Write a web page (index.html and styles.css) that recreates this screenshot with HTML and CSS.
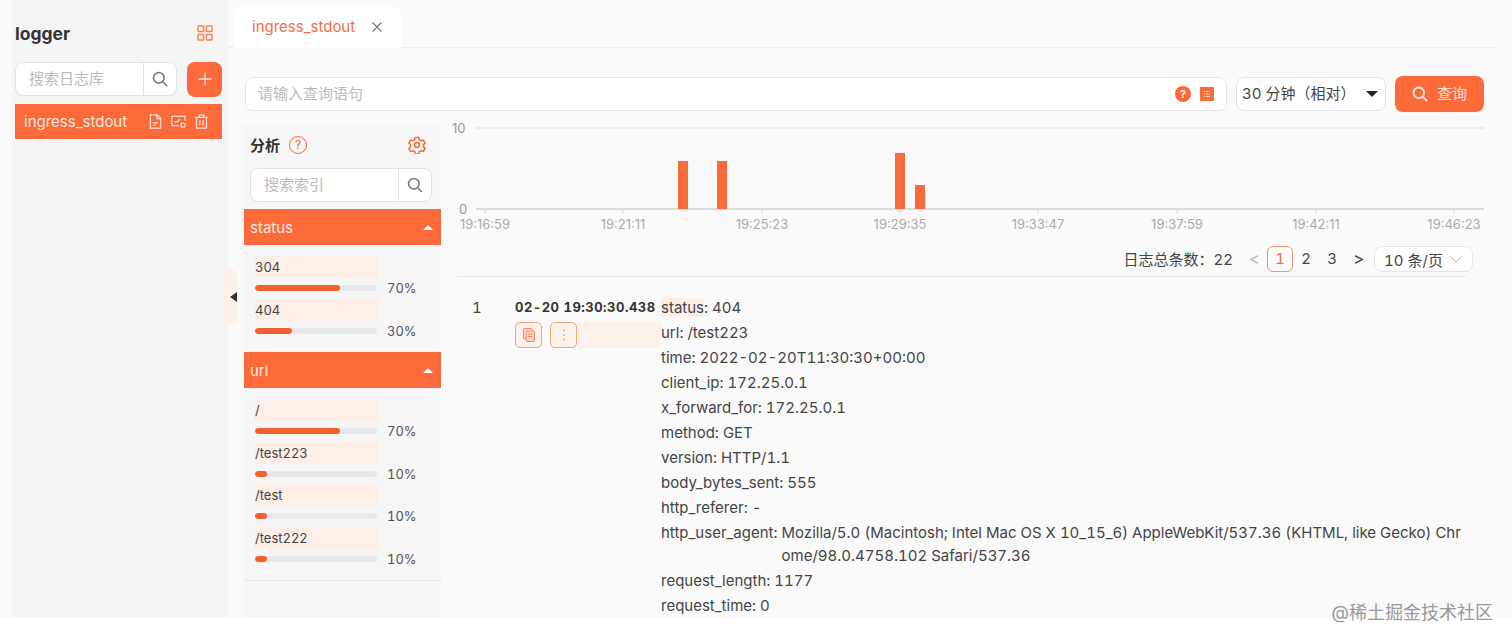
FILE: index.html
```html
<!DOCTYPE html>
<html lang="zh">
<head>
<meta charset="utf-8">
<title>logger</title>
<link rel="stylesheet" href="styles.css">
</head>
<body>
<div class="app">
  <aside class="sidebar">
    <div class="side-head">
      <span class="side-title">logger</span>
      <svg class="ico16" viewBox="0 0 16 16" fill="none" stroke="#f58458" stroke-width="1.500"><rect x="1" y="1" width="5.600" height="5.600" rx=".6"/><rect x="9.400" y="1" width="5.600" height="5.600" rx=".6"/><rect x="1" y="9.400" width="5.600" height="5.600" rx=".6"/><rect x="9.400" y="9.400" width="5.600" height="5.600" rx=".6"/></svg>
    </div>
    <div class="side-search">
      <div class="search side-box">
        <span class="search-text">搜索日志库</span>
        <span class="search-btn"><svg class="ico16" viewBox="0 0 16 16" fill="none" stroke="#777" stroke-width="1.600"><circle cx="6.800" cy="6.800" r="5.300"/><path d="M10.800 10.800L15 15"/></svg></span>
      </div>
      <span class="add-btn"><svg class="ico16" viewBox="0 0 16 16" stroke="#ffe4d9" stroke-width="1.300"><path d="M8 1.500v13M1.500 8h13"/></svg></span>
    </div>
    <div class="side-item">
      <span class="side-item-name">ingress_stdout</span>
      <svg class="ico-item" viewBox="0 0 16 16" fill="none" stroke="#ffe4d9" stroke-width="1.300"><path d="M2.500 1h7.500l3.500 3.500V15h-11zM9.500 1v4h4M5 9.500h5.500M5 12h3"/></svg>
      <svg class="ico-item" viewBox="0 0 16 16" fill="none" stroke="#ffe4d9" stroke-width="1.300"><path d="M15 7.500V2.500H.7v10h8M3.500 8.500h3.500l2.500-3"/><circle cx="12.700" cy="12" r="2.300"/></svg>
      <svg class="ico-item" viewBox="0 0 16 16" fill="none" stroke="#ffe4d9" stroke-width="1.300"><path d="M1 3.500h14M5.500 3.500V1h5v2.500M2.700 3.500V15h10.600V3.500M6.300 6.500v6M9.700 6.500v6"/></svg>
    </div>
  </aside>

  <main class="main">
    <div class="tabs">
      <div class="tab"><span class="tab-name">ingress_stdout</span><svg class="tab-close" viewBox="0 0 10 10" stroke="#777" stroke-width="1.200"><path d="M.5.500l9 9M9.500.500l-9 9"/></svg></div>
    </div>

    <div class="query">
      <div class="query-input">
        <span class="query-hint">请输入查询语句</span>
        <span class="help-dot">?</span>
        <span class="doc-icon"><svg viewBox="0 0 8 8" stroke="#ffd9c8" stroke-width="1"><path d="M1 1.500h1M3 1.500h4M1 4h1M3 4h4M1 6.500h1M3 6.500h4"/></svg></span>
      </div>
      <div class="time-select"><span class="lift">30 分钟（相对）</span><i class="caret-down"></i></div>
      <div class="query-btn"><svg class="ico16" viewBox="0 0 16 16" fill="none" stroke="#ffeee7" stroke-width="1.800"><circle cx="6.800" cy="6.800" r="5.300"/><path d="M10.800 10.800L15 15"/></svg><span class="lift">查询</span></div>
    </div>

    <div class="content">
      <section class="analysis">
        <div class="ana-head">
          <span class="ana-title">分析</span>
          <span class="ana-help">?</span>
          <svg class="ana-gear" viewBox="0 0 24 24" fill="none" stroke="#f26a3a" stroke-width="2" stroke-linejoin="round"><circle cx="12" cy="12" r="3.200"/><path d="M9.700 2h4.600l.7 3 2.500 1.400 3-.9 2.300 4-2.200 2.100v2.800l2.200 2.100-2.300 4-3-.9-2.500 1.400-.7 3H9.700l-.7-3-2.500-1.400-3 .9-2.300-4 2.200-2.100v-2.800L1.200 9.500l2.300-4 3 .9L9 5z"/></svg>
        </div>
        <div class="search ana-box">
          <span class="search-text">搜索索引</span>
          <span class="search-btn"><svg class="ico16" viewBox="0 0 16 16" fill="none" stroke="#777" stroke-width="1.600"><circle cx="6.800" cy="6.800" r="5.300"/><path d="M10.800 10.800L15 15"/></svg></span>
        </div>

        <div class="group-head"><span>status</span><i class="caret-up"></i></div>
        <div class="group-body">
          <div class="stat"><div class="stat-name">304</div><div class="stat-row"><div class="track"><div class="fill" style="width:70%"></div></div><span class="pct">70%</span></div></div>
          <div class="stat"><div class="stat-name">404</div><div class="stat-row"><div class="track"><div class="fill" style="width:30%"></div></div><span class="pct">30%</span></div></div>
        </div>

        <div class="group-head"><span>url</span><i class="caret-up"></i></div>
        <div class="group-body last">
          <div class="stat"><div class="stat-name">/</div><div class="stat-row"><div class="track"><div class="fill" style="width:70%"></div></div><span class="pct">70%</span></div></div>
          <div class="stat"><div class="stat-name">/test223</div><div class="stat-row"><div class="track"><div class="fill" style="width:10%"></div></div><span class="pct">10%</span></div></div>
          <div class="stat"><div class="stat-name">/test</div><div class="stat-row"><div class="track"><div class="fill" style="width:10%"></div></div><span class="pct">10%</span></div></div>
          <div class="stat"><div class="stat-name">/test222</div><div class="stat-row"><div class="track"><div class="fill" style="width:10%"></div></div><span class="pct">10%</span></div></div>
        </div>
      </section>

      <section class="results">
        <svg class="chart" viewBox="0 0 1044 120" width="1044" height="120">
          <line x1="35" y1="8" x2="1043" y2="8" stroke="#dedede"/>
          <line x1="35" y1="89" x2="1043" y2="89" stroke="#cfcfcf" stroke-width="1.500"/>
          <g stroke="#d4d4d4"><path d="M44 89v4M182 89v4M321 89v4M459 89v4M597 89v4M736 89v4M875 89v4M1013 89v4"/></g>
          <text class="chart-y" x="11" y="13">10</text>
          <text class="chart-y" x="18" y="94">0</text>
          <g class="chart-x" text-anchor="middle">
            <text x="44" y="109">19:16:59</text><text x="182" y="109">19:21:11</text><text x="321" y="109">19:25:23</text><text x="459" y="109">19:29:35</text><text x="597" y="109">19:33:47</text><text x="736" y="109">19:37:59</text><text x="875" y="109">19:42:11</text><text x="1013" y="109">19:46:23</text>
          </g>
          <g fill="#f96b3b">
            <rect x="237" y="41" width="10" height="48"/><rect x="276" y="41" width="10" height="48"/><rect x="454" y="33" width="10" height="56"/><rect x="474" y="65" width="10" height="24"/>
          </g>
        </svg>

        <div class="pager">
          <span class="total">日志总条数：22</span>
          <span class="page-arrow dim">&lt;</span>
          <span class="page-num current">1</span>
          <span class="page-num">2</span>
          <span class="page-num">3</span>
          <span class="page-arrow next">&gt;</span>
          <span class="page-size"><span>10 条/页</span><svg viewBox="0 0 12 7" fill="none" stroke="#c4c4c4" stroke-width="1.100"><path d="M.5.500L6 6l5.500-5.500"/></svg></span>
        </div>

        <div class="log">
          <div class="log-index">1</div>
          <div class="log-meta">
            <div class="log-time">02-20 19:30:30.438</div>
            <div class="log-actions">
              <span class="act"><svg viewBox="0 0 14 14" fill="#fbd4c1" stroke="#f08a62"><rect x="1.500" y=".5" width="8.500" height="10.500" rx="1"/><rect x="4" y="3" width="8.500" height="10.500" rx="1"/><path d="M6 6h4.500M6 8.500h4.500"/></svg></span>
              <span class="act"><svg viewBox="0 0 14 14" fill="#f4a382"><circle cx="7" cy="2.500" r=".9"/><circle cx="7" cy="7" r=".9"/><circle cx="7" cy="11.500" r=".9"/></svg></span>
              <span class="act-glow"></span>
            </div>
          </div>
          <div class="fields">
            <div class="field"><span class="key"><span class="hl">status</span>:</span><span class="val">404</span></div>
            <div class="field"><span class="key">url:</span><span class="val">/test223</span></div>
            <div class="field"><span class="key">time:</span><span class="val">2022-02-20T11:30:30+00:00</span></div>
            <div class="field"><span class="key">client_ip:</span><span class="val">172.25.0.1</span></div>
            <div class="field"><span class="key">x_forward_for:</span><span class="val">172.25.0.1</span></div>
            <div class="field"><span class="key">method:</span><span class="val">GET</span></div>
            <div class="field"><span class="key">version:</span><span class="val">HTTP/1.1</span></div>
            <div class="field"><span class="key">body_bytes_sent:</span><span class="val">555</span></div>
            <div class="field"><span class="key">http_referer:</span><span class="val">-</span></div>
            <div class="field"><span class="key">http_user_agent:</span><span class="val">Mozilla/5.0 (Macintosh; Intel Mac OS X 10_15_6) AppleWebKit/537.36 (KHTML, like Gecko) Chrome/98.0.4758.102 Safari/537.36</span></div>
            <div class="field"><span class="key">request_length:</span><span class="val">1177</span></div>
            <div class="field"><span class="key">request_time:</span><span class="val">0</span></div>
          </div>
        </div>
      </section>
    </div>
  </main>

  <div class="collapse"><i class="caret-left"></i></div>
</div>
<div class="watermark">@稀土掘金技术社区</div>
</body>
</html>
```
FILE: styles.css
```css
* { box-sizing: border-box; }
html, body { margin: 0; height: 642px; overflow: hidden; background: #fff; }
body { font-family: Inter, "Noto Sans CJK SC", sans-serif; color: #333; font-size: 15px; font-variant-numeric: tabular-nums; }
.app { position: relative; display: flex; height: 618px; background: #fafafa; padding-left: 12px; overflow: hidden; }
.ico16 { width: 16px; height: 16px; display: block; flex: none; }
.lift { position: relative; top: -2px; }

.sidebar { width: 216px; flex: none; background: #f5f5f5; padding: 0 6px 0 3px; }
.side-head { display: flex; justify-content: space-between; align-items: center; height: 66px; padding-right: 9px; }
.side-title { font-size: 17.500px; font-weight: 700; color: #333; }
.side-search { display: flex; gap: 10px; align-items: center; height: 36px; margin-top: -5px; }
.search { display: flex; align-items: stretch; background: #fff; border: 1px solid #e2e2e2; border-radius: 8px; height: 34px; }
.side-box { width: 162px; }
.search-text { flex: 1; padding-left: 13px; color: #bcbcbc; font-size: 15px; line-height: 31px; }
.search-btn { width: 33px; flex: none; display: flex; align-items: center; justify-content: center; border-left: 1px solid #e2e2e2; }
.add-btn { width: 35px; height: 35px; border-radius: 8px; background: #fb6a38; display: flex; align-items: center; justify-content: center; }
.side-item { display: flex; align-items: center; height: 35px; margin-top: 7px; background: #fb6a38; padding: 0 13px 0 9px; gap: 8px; }
.side-item-name { flex: 1; font-size: 15px; color: #ffe9e0; }
.ico-item { width: 15px; height: 15px; flex: none; }

.main { flex: 1; min-width: 0; }
.tabs { height: 48px; padding: 7px 0 0 7px; margin-right: 17px; border-bottom: 1px solid #eee; }
.tab { width: 166px; height: 41px; background: #fff; border-radius: 6px 6px 0 0; display: flex; align-items: center; padding: 0 19px 2px 17px; justify-content: space-between; }
.tab-name { color: #f26f42; font-size: 15px; }
.tab-close { width: 10px; height: 10px; }

.query { display: flex; align-items: center; gap: 9px; margin: 28px 28px 0 17px; height: 36px; }
.query-input { flex: 1; height: 34px; display: flex; align-items: center; gap: 9px; background: #fff; border: 1px solid #e6e6e6; border-radius: 8px; padding: 0 12px; }
.query-hint { flex: 1; color: #bcbcbc; font-size: 15px; position: relative; top: -2px; }
.help-dot { width: 16px; height: 16px; border-radius: 50%; background: #fb6a38; color: #fff; font-size: 11px; font-weight: 700; text-align: center; line-height: 16px; }
.doc-icon { width: 14px; height: 14px; background: #fb6a38; padding: 3px; }
.doc-icon svg { display: block; width: 8px; height: 8px; }
.time-select { width: 150px; height: 34px; display: flex; align-items: center; justify-content: space-between; background: #fff; border: 1px solid #e2e2e2; border-radius: 8px; padding: 0 7px 0 5px; color: #444; font-size: 15px; }
.caret-down { width: 0; height: 0; border: 6px solid transparent; border-top: 6px solid #222; border-bottom: 0; }
.query-btn { width: 89px; height: 36px; display: flex; align-items: center; justify-content: center; gap: 9px; background: #fb6a38; border-radius: 8px; color: #ffe4d9; font-size: 15px; }

.content { display: flex; margin: 13px 28px 0 16px; }
.analysis { width: 197px; height: 493px; flex: none; background: #f6f6f6; }
.ana-head { display: flex; align-items: center; height: 40px; padding: 0 15px 0 6px; }
.ana-title { font-size: 15px; font-weight: 700; color: #333; position: relative; top: -1px; }
.ana-help { width: 18px; height: 18px; margin-left: 9px; border: 1.500px solid #f26a3a; border-radius: 50%; color: #f26a3a; font-size: 12px; text-align: center; line-height: 15px; }
.ana-gear { width: 18px; height: 18px; margin-left: auto; }
.ana-box { width: 182px; margin: 3px 0 7px 6px; height: 34px; }
.group-head { display: flex; align-items: center; justify-content: space-between; height: 36px; background: #fb6a38; color: #ffe9e0; padding: 0 6px; font-size: 15px; }
.caret-up { width: 0; height: 0; border: 5px solid transparent; border-bottom: 5px solid #fff; border-top: 0; margin-right: 2px; }
.group-body { padding: 11px 0 11px 11px; }
.group-body.last { border-bottom: 1px solid #e6e6e6; }
.stat { height: 42.500px; }
.stat-name { width: 123px; height: 22px; background: #fdeee7; font-size: 13px; color: #444; line-height: 22px; }
.stat-row { display: flex; align-items: center; height: 20px; }
.track { width: 122px; height: 6px; border-radius: 3px; background: #e8e8e8; overflow: hidden; }
.fill { height: 100%; border-radius: 3px; background: #f4602f; }
.pct { margin-left: 10px; font-size: 13px; color: #555; }

.results { flex: 1; min-width: 0; }
.chart { display: block; margin-top: -5px; font-variant-numeric: normal; }
.chart-y { font-size: 13px; fill: #999; }
.chart-x { font-size: 13px; fill: #aaa; }
.pager { display: flex; align-items: center; height: 26px; margin: 6px 0 0 16px; padding-right: 11px; justify-content: flex-end; font-size: 15px; color: #444; }
.total { margin-right: 14px; position: relative; top: -1px; }
.page-arrow { width: 14px; text-align: center; font-size: 17px; }
.page-arrow.dim { color: #bbb; margin-right: 6px; }
.page-arrow.next { margin-left: 7px; }
.page-num { width: 26px; height: 26px; line-height: 24px; text-align: center; border: 1px solid transparent; border-radius: 6px; }
.page-num.current { color: #f26f42; border-color: #f4936f; }
.page-size { width: 99px; height: 26px; margin-left: 8px; display: flex; align-items: center; justify-content: space-between; background: #fff; border: 1px solid #e6e6e6; border-radius: 8px; padding: 0 10px 0 9px; }
.page-size svg { width: 12px; height: 7px; }
.log { display: flex; margin: 4px 18px 0 16px; padding-top: 19px; border-top: 1px solid #e8e8e8; }
.log-index { width: 58px; flex: none; padding-left: 15px; font-size: 15px; color: #444; line-height: 24px; }
.log-meta { width: 146px; flex: none; padding-top: 1px; }
.log-time { font-weight: 700; font-size: 13px; letter-spacing: .5px; line-height: 20px; color: #333; white-space: nowrap; }
.log-actions { display: flex; gap: 8px; margin-top: 5px; }
.act { width: 27px; height: 26px; flex: none; display: flex; align-items: center; justify-content: center; border: 1px solid #f4a382; border-radius: 5px; background: #fdf1eb; }
.act svg { width: 14px; height: 14px; }
.act-glow { width: 85px; height: 26px; margin-left: -8px; background: #fdf1eb; }
.fields { flex: 1; min-width: 0; font-size: 15px; color: #444; line-height: 23px; }
.field { display: flex; margin-bottom: 2px; }
.key { flex: none; white-space: nowrap; margin-right: 4px; }
.hl { background: #fdeee7; }
.val { word-break: break-all; }

.collapse { position: absolute; left: 223px; top: 268px; width: 14px; height: 57px; background: #fdf0ea; border-radius: 0 9px 9px 0; display: flex; align-items: center; justify-content: flex-end; }
.caret-left { width: 0; height: 0; border: 5px solid transparent; border-right: 7px solid #333; border-left: 0; }
.watermark { position: absolute; right: 19px; top: 598px; font-size: 18px; color: #999; }
```
